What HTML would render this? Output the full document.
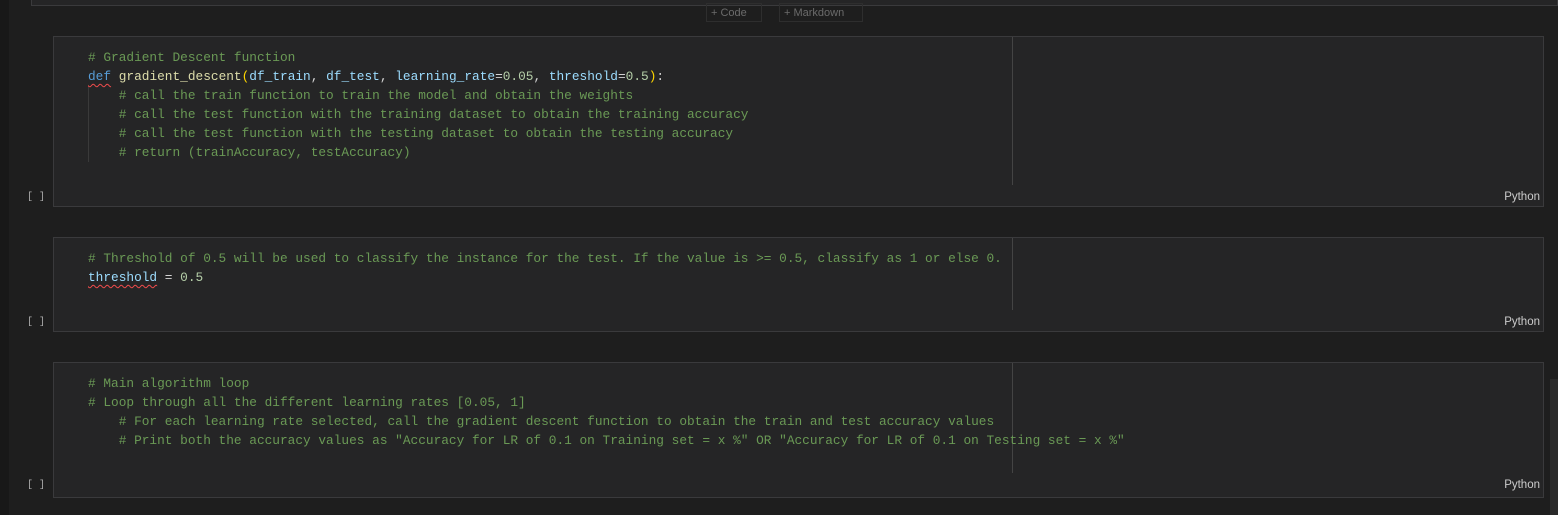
<!DOCTYPE html>
<html><head><style>
body{margin:0;width:1558px;height:515px;background:#1e1e1e;position:relative;overflow:hidden;font-family:"Liberation Sans",sans-serif}
.strip{position:absolute;left:0;top:0;width:9px;height:515px;background:#181818}
.cell{position:absolute;left:53px;width:1491px;background:#252526;border:1px solid #3a3a3c;box-sizing:border-box}
.code{position:absolute;left:88px;font-family:"Liberation Mono",monospace;font-size:12.8px;line-height:19px;color:#d4d4d4;white-space:pre}
.c{color:#6a9955}.k{color:#569cd6}.f{color:#dcdcaa}.p{color:#9cdcfe}.n{color:#b5cea8}.y{color:#ffd700}
.sq{text-decoration:underline wavy #f14c4c;text-decoration-thickness:1px;text-underline-offset:3px}
.ruler{position:absolute;left:1012px;width:1px;background:#444}
.guide{position:absolute;left:88px;width:1px;background:#3a3a3a}
.py{position:absolute;right:18px;font-size:11.5px;color:#cccccc}
.br{position:absolute;left:27px;font-family:"Liberation Mono",monospace;font-size:10px;color:#aaa}
.btn{position:absolute;top:3px;height:19px;border:1px solid #2e2e2e;color:#6b6b6b;font-size:11px;line-height:19px;box-sizing:border-box;padding:0 4px}
</style></head><body>
<div class="strip"></div>
<div style="position:absolute;left:31px;top:-2px;width:1527px;height:8px;border:1px solid #3a3a3c;border-top:none;background:#252526;box-sizing:border-box"></div>
<div class="btn" style="left:706px;width:56px">+ Code</div>
<div class="btn" style="left:779px;width:84px">+ Markdown</div>

<div class="cell" style="top:36px;height:171px"></div>
<div class="ruler" style="top:37px;height:148px"></div>
<div class="guide" style="top:86px;height:76px"></div>
<div class="code" style="top:48px"><span class="c"># Gradient Descent function</span>
<span class="k sq">def</span> <span class="f">gradient_descent</span><span class="y">(</span><span class="p">df_train</span>, <span class="p">df_test</span>, <span class="p">learning_rate</span>=<span class="n">0.05</span>, <span class="p">threshold</span>=<span class="n">0.5</span><span class="y">)</span>:
    <span class="c"># call the train function to train the model and obtain the weights</span>
    <span class="c"># call the test function with the training dataset to obtain the training accuracy</span>
    <span class="c"># call the test function with the testing dataset to obtain the testing accuracy</span>
    <span class="c"># return (trainAccuracy, testAccuracy)</span></div>
<div class="br" style="top:192px">[ ]</div>
<div class="py" style="top:191px">Python</div>

<div class="cell" style="top:237px;height:95px"></div>
<div class="ruler" style="top:238px;height:72px"></div>
<div class="code" style="top:249px"><span class="c"># Threshold of 0.5 will be used to classify the instance for the test. If the value is &gt;= 0.5, classify as 1 or else 0.</span>
<span class="p sq">threshold</span> = <span class="n">0.5</span></div>
<div class="br" style="top:317px">[ ]</div>
<div class="py" style="top:316px">Python</div>

<div class="cell" style="top:362px;height:136px"></div>
<div class="ruler" style="top:363px;height:110px"></div>
<div class="code" style="top:374px"><span class="c"># Main algorithm loop</span>
<span class="c"># Loop through all the different learning rates [0.05, 1]</span>
    <span class="c"># For each learning rate selected, call the gradient descent function to obtain the train and test accuracy values</span>
    <span class="c"># Print both the accuracy values as "Accuracy for LR of 0.1 on Training set = x %" OR "Accuracy for LR of 0.1 on Testing set = x %"</span></div>
<div class="br" style="top:480px">[ ]</div>
<div class="py" style="top:479px">Python</div>

<div style="position:absolute;left:1550px;top:379px;width:8px;height:136px;background:#2a2a2a"></div>
</body></html>
